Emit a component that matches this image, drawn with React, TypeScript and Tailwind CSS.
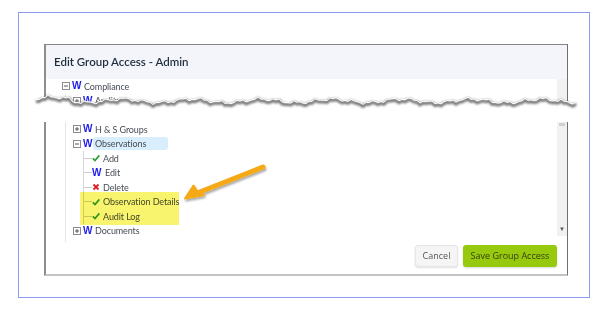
import React from "react";

const Toggle = ({ open }: { open: boolean }) => (
  <svg width="8" height="8" viewBox="0 0 8 8" className="shrink-0">
    <rect x="0.5" y="0.5" width="7" height="7" fill="white" stroke="#8c8c8c" />
    <line x1="2" y1="4" x2="6" y2="4" stroke="#555" />
    {!open && <line x1="4" y1="2" x2="4" y2="6" stroke="#555" />}
  </svg>
);

const W = () => (
  <span className="w-[10px] shrink-0 text-[10px] font-bold leading-none text-[#1d1de8] [font-family:'Liberation_Sans',Arial,sans-serif]">
    W
  </span>
);

const Check = () => (
  <svg width="8" height="8" viewBox="0 0 8 8" className="shrink-0">
    <path d="M0.8 4.4 L3 6.6 L7.4 1.4" fill="none" stroke="#2f9e35" strokeWidth="1.7" />
  </svg>
);

const Cross = () => (
  <svg width="8" height="8" viewBox="0 0 8 8" className="shrink-0">
    <path d="M1.5 1.5 L6.5 6.5 M6.5 1.5 L1.5 6.5" fill="none" stroke="#e21f1f" strokeWidth="1.8" />
  </svg>
);

const Label = ({ text, selected }: { text: string; selected?: boolean }) => (
  <span
    className={
      "flex h-[13px] items-center rounded-[3px] px-[2px] text-[9px] tracking-[-0.1px] text-[#474c55] " +
      (selected ? "bg-[#d8eefc] pr-[22px]" : "")
    }
  >
    {text}
  </span>
);

const ParentRow = ({ open, text, pl, selected }: { open: boolean; text: string; pl: string; selected?: boolean }) => (
  <div className={"flex h-[14.5px] items-center " + pl}>
    <Toggle open={open} />
    <span className="w-[2px] shrink-0" />
    <W />
    <Label text={text} selected={selected} />
  </div>
);

const LeafRow = ({ icon, text }: { icon: "check" | "w" | "x"; text: string }) => (
  <div className="flex h-[14.5px] items-center">
    <span className="h-px w-[8px] shrink-0 bg-[#cfcfcf]" />
    {icon === "check" ? <Check /> : icon === "x" ? <Cross /> : <W />}
    <span className="w-[1px] shrink-0" />
    <Label text={text} />
  </div>
);

function wavePoints() {
  const pts: [number, number][] = [];
  for (let x = 36; x <= 576; x += 3) {
    const y =
      100.5 +
      1.8 * Math.sin(x * 0.09) +
      1.2 * Math.sin(x * 0.33 + 1.3) +
      0.9 * Math.sin(x * 0.87 + 0.4) +
      (x < 70 ? -2 : 0);
    pts.push([x, y]);
  }
  return pts;
}

export default function App() {
  const pts = wavePoints();
  const line = pts.map(([x, y], i) => (i === 0 ? "M" : "L") + x.toFixed(1) + " " + y.toFixed(1)).join(" ");
  const fill = line + " L576 121 L36 121 Z";

  return (
    <div className="relative h-[312px] w-[608px] overflow-hidden bg-white [font-family:Lato,'Open_Sans',sans-serif]">
      <div className="ml-[18px] mt-[12px] h-[286px] w-[572px] border border-[#8d9cf3] pl-[25px] pt-[31px]">
        <div className="w-[524px]">
          {/* top piece */}
          <div className="h-[60px] overflow-hidden border-l-2 border-r border-t border-l-[#8e8e8e] border-r-[#6e6e6e] border-t-[#858585]">
            <div className="flex h-[34px] items-center bg-[#f3f5fa] pl-[8px] text-[11.5px] font-semibold text-[#1f2d3d]">
              Edit Group Access - Admin
            </div>
            <div className="flex">
              <div className="flex-1">
                <ParentRow open text="Compliance" pl="pl-[16px]" />
                <div className="ml-[19px] border-l border-[#e2e2e2]">
                  <ParentRow open={false} text="Audits" pl="pl-[7px]" />
                </div>
              </div>
              <div className="h-[30px] w-[10px] bg-[#f1f1f1]" />
            </div>
          </div>

          <div className="h-[18px]" />

          {/* bottom piece */}
          <div className="border-b-2 border-l-2 border-r border-b-[#c4c4c4] border-l-[#8e8e8e] border-r-[#6e6e6e]">
            <div className="flex h-[114px]">
              <div className="flex-1">
                <div className="ml-[19px] border-l border-[#e4e4e4] pb-[4px]">
                  <ParentRow open={false} text="H & S Groups" pl="pl-[7px]" />
                  <ParentRow open text="Observations" pl="pl-[7px]" selected />
                  <div className="ml-[17px] border-l border-[#d6d6d6]">
                    <LeafRow icon="check" text="Add" />
                    <LeafRow icon="w" text="Edit" />
                    <LeafRow icon="x" text="Delete" />
                    <LeafRow icon="check" text="Observation Details" />
                    <LeafRow icon="check" text="Audit Log" />
                  </div>
                  <ParentRow open={false} text="Documents" pl="pl-[7px]" />
                </div>
              </div>
              <div className="relative flex w-[10px] flex-col items-center justify-end bg-[#f1f1f1] pb-[4px]">
                <div className="absolute top-[1px] h-[3px] w-[6px] bg-[#d0d0d0]" />
                <span className="text-[6px] leading-none text-[#555]">▼</span>
              </div>
            </div>
            <div className="flex justify-end gap-[5px] pb-[7px] pr-[10px] pt-[9px] [font-family:'Open_Sans',sans-serif]">
              <button className="flex h-[22px] w-[43px] items-center justify-center rounded-[3px] border border-[#e6e6e6] bg-[#f5f5f5] text-[9px] text-[#555] shadow-[0_1px_2px_rgba(0,0,0,0.12)]">
                Cancel
              </button>
              <button className="flex h-[22px] w-[94px] items-center justify-center rounded-[3px] bg-[#97c90f] text-[9px] text-[#34420f] shadow-[0_1px_2px_rgba(0,0,0,0.15)]">
                Save Group Access
              </button>
            </div>
          </div>
        </div>
      </div>

      {/* yellow highlight */}
      <div className="absolute left-[80px] top-[192px] h-[33px] w-[99px] bg-[#f9f46e] mix-blend-multiply" />

      {/* torn edge */}
      <svg className="absolute left-0 top-0" width="608" height="312" viewBox="0 0 608 312">
        <defs>
          <filter id="blur" x="-5%" y="-200%" width="110%" height="500%">
            <feGaussianBlur stdDeviation="1.2" />
          </filter>
          <filter id="ash" x="-20%" y="-50%" width="140%" height="200%">
            <feGaussianBlur in="SourceAlpha" stdDeviation="1.2" />
            <feOffset dx="1" dy="1.5" />
            <feComponentTransfer>
              <feFuncA type="linear" slope="0.35" />
            </feComponentTransfer>
            <feMerge>
              <feMergeNode />
              <feMergeNode in="SourceGraphic" />
            </feMerge>
          </filter>
        </defs>
        <path d={fill} fill="white" />
        <path d={line} transform="translate(0 2)" fill="none" stroke="#666" strokeWidth="3.2" filter="url(#blur)" opacity="0.9" />
        <path d={line} transform="translate(0 0.2)" fill="none" stroke="#ffffff" strokeWidth="1" />

        {/* arrow */}
        <g filter="url(#ash)">
          <line x1="263" y1="167" x2="196" y2="193.5" stroke="#f5a914" strokeWidth="5" strokeLinecap="round" />
          <path d="M185 198.5 L193.5 185.5 L197 191 L204 195 Z" fill="#f5a914" stroke="#f5a914" strokeWidth="2" strokeLinejoin="round" />
        </g>
      </svg>
    </div>
  );
}
